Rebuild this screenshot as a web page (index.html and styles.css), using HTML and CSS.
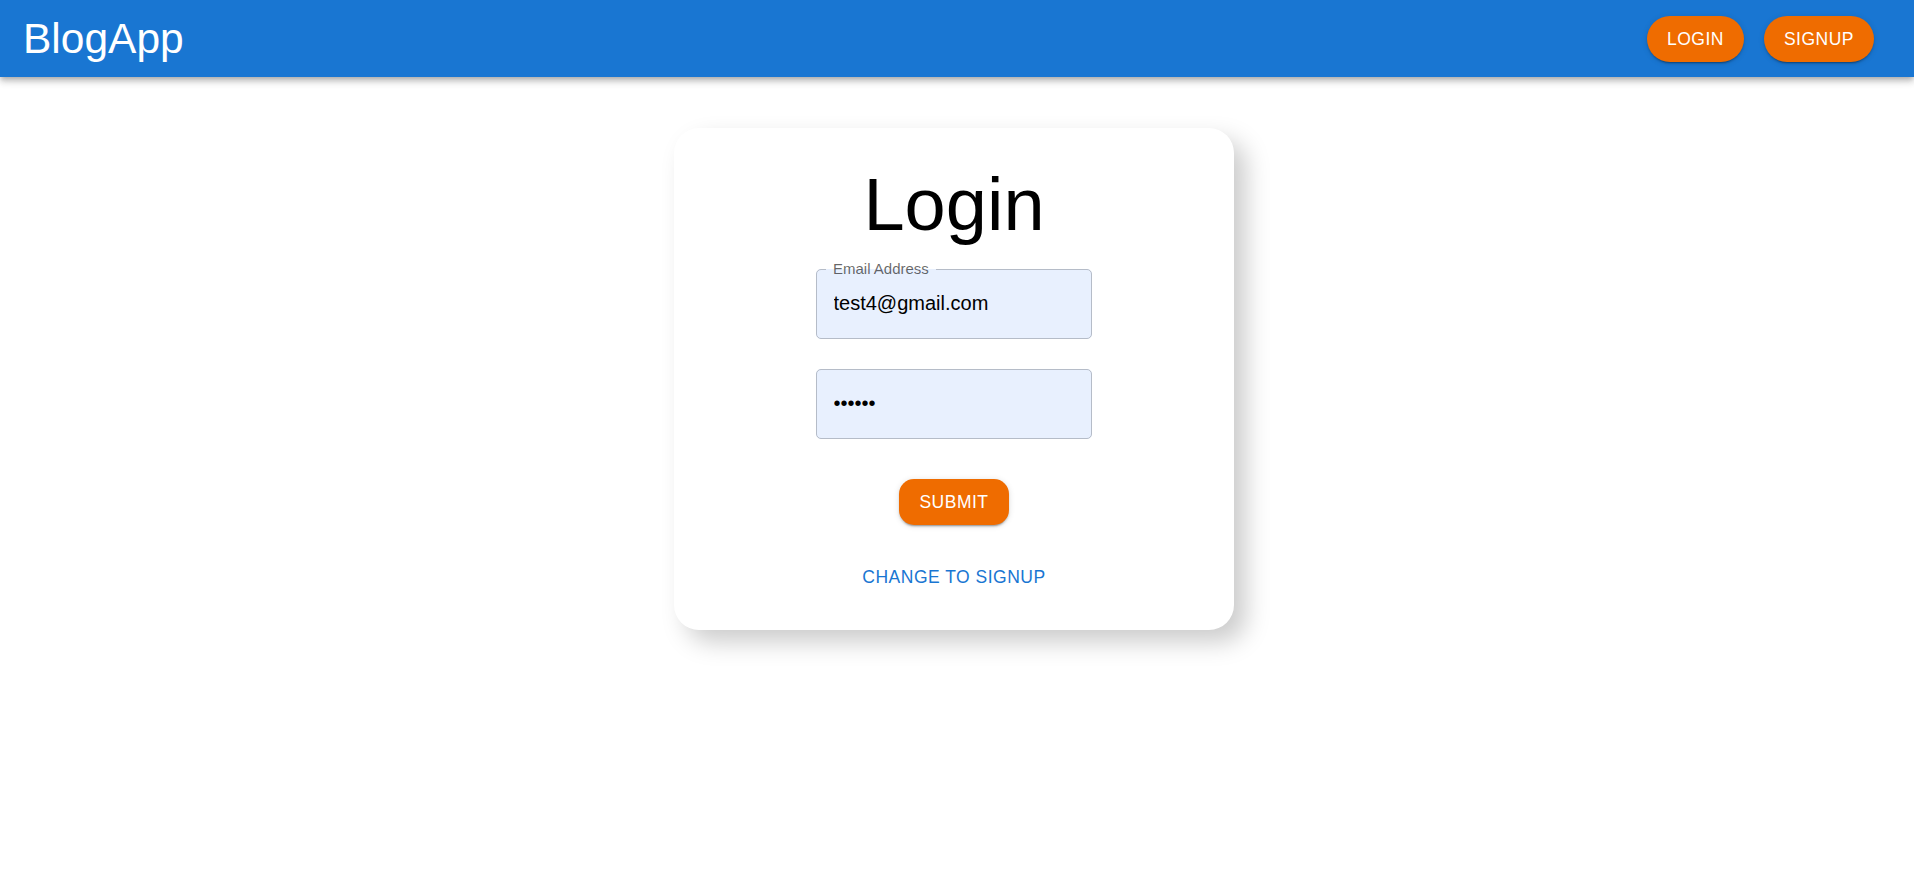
FILE: index.html
```html
<!DOCTYPE html>
<html lang="en">
<head>
  <meta charset="UTF-8">
  <title>BlogApp - Login</title>
  <link rel="stylesheet" href="styles.css">
</head>
<body>
  <header class="app-bar">
    <div class="brand">BlogApp</div>
    <nav class="nav-buttons">
      <button class="pill-btn">Login</button>
      <button class="pill-btn">Signup</button>
    </nav>
  </header>

  <main class="page">
    <form class="auth-card" onsubmit="return false">
      <h2 class="auth-title">Login</h2>

      <div class="field">
        <input type="email" value="test4@gmail.com">
        <fieldset class="outline"><legend>Email Address</legend></fieldset>
        <label class="field-label">Email Address</label>
      </div>

      <div class="field">
        <input type="password" value="123456">
        <fieldset class="outline"><legend class="empty"></legend></fieldset>
      </div>

      <button type="submit" class="submit-btn">Submit</button>
      <button type="button" class="text-btn">Change to Signup</button>
    </form>
  </main>
</body>
</html>
```

FILE: styles.css
```css
html, body {
  min-height: 100%;
}

body {
  margin: 0;
  min-height: 100vh;
  background: #ffffff;
  font-family: "Liberation Sans", Arial, sans-serif;
  color: #000;
}

button {
  font-family: inherit;
  cursor: pointer;
}

.app-bar {
  height: 77px;
  background-color: #1976d2;
  color: #fff;
  display: flex;
  align-items: center;
  justify-content: space-between;
  padding: 0 30px 0 23px;
  box-shadow: 0 2px 5px -1px rgba(0,0,0,0.2), 0 5px 6px 0 rgba(0,0,0,0.14), 0 1px 12px 0 rgba(0,0,0,0.12);
}

.brand {
  font-size: 42.5px;
  line-height: 1.2;
}

.nav-buttons {
  display: flex;
  margin-top: 1px;
}

.pill-btn {
  margin: 0 10px;
  background-color: #ef6c00;
  color: #fff;
  border: none;
  border-radius: 100px;
  padding: 7.5px 20px;
  font-size: 17.5px;
  line-height: 30.6px;
  letter-spacing: 0.5px;
  text-transform: uppercase;
  box-shadow: 0 3px 1px -2px rgba(0,0,0,0.2), 0 2px 2px 0 rgba(0,0,0,0.14), 0 1px 6px 0 rgba(0,0,0,0.12);
}

.page {
  padding: 51px 0 80px;
  display: flex;
  justify-content: center;
}

.auth-card {
  width: 560px;
  box-sizing: border-box;
  margin-right: 6px;
  padding: 30px;
  border-radius: 25px;
  background: #fff;
  box-shadow: 12px 12px 25px #ccc;
  display: flex;
  flex-direction: column;
  align-items: center;
}

.auth-title {
  margin: 0;
  padding-top: 2px;
  font-size: 74px;
  font-weight: 400;
  line-height: 89px;
}

.field {
  position: relative;
  width: 276px;
  height: 70px;
  margin: 20px 0 10px;
}

.field input {
  display: block;
  width: 100%;
  height: 100%;
  box-sizing: border-box;
  margin: 0;
  border: none;
  outline: none;
  border-radius: 5px;
  background-color: #e8f0fe;
  padding: 0 17.5px 1px;
  font-family: inherit;
  font-size: 20px;
  color: #000;
}

.outline {
  position: absolute;
  top: -6px;
  left: 0;
  right: 0;
  bottom: 0;
  margin: 0;
  padding: 0 9px;
  border: 1px solid #b5bcc8;
  border-radius: 5px;
  pointer-events: none;
}

.outline legend {
  visibility: hidden;
  height: 12px;
  padding: 0 7px;
  font-size: 15px;
  line-height: 12px;
  white-space: nowrap;
}

.outline legend.empty {
  padding: 0;
  width: 0;
}

.field-label {
  position: absolute;
  left: 17px;
  top: -11px;
  font-size: 15px;
  line-height: 22px;
  color: rgba(0,0,0,0.6);
}

.submit-btn {
  margin-top: 30px;
  background-color: #ef6c00;
  color: #fff;
  border: none;
  border-radius: 15px;
  padding: 7.5px 20px;
  font-size: 17.5px;
  line-height: 30.6px;
  letter-spacing: 0.5px;
  text-transform: uppercase;
  box-shadow: 0 3px 1px -2px rgba(0,0,0,0.2), 0 2px 2px 0 rgba(0,0,0,0.14), 0 1px 6px 0 rgba(0,0,0,0.12);
}

.text-btn {
  margin-top: 30px;
  background: none;
  border: none;
  border-radius: 5px;
  color: #1976d2;
  padding: 7.5px 10px;
  font-size: 17.5px;
  line-height: 30.6px;
  letter-spacing: 0.5px;
  text-transform: uppercase;
}
```
